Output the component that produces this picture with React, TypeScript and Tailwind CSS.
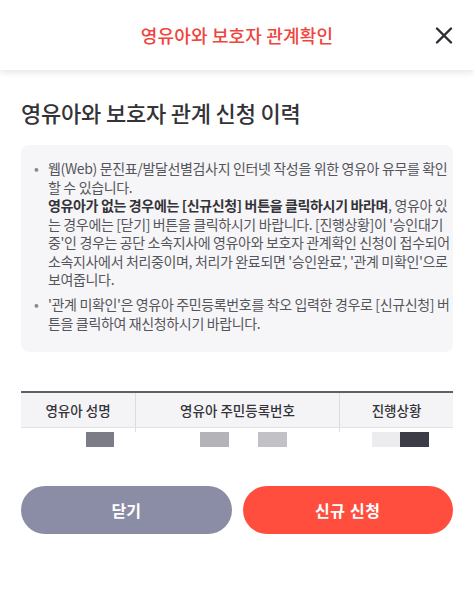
const font = "font-['Noto_Sans_CJK_KR','Noto_Sans',sans-serif]";

function CloseIcon() {
  return (
    <svg width="18" height="17" viewBox="0 0 18 17" fill="none" stroke="#2d2d33" strokeWidth="2.4" strokeLinecap="round">
      <path d="M2 1.5 L16 15.5" />
      <path d="M16 1.5 L2 15.5" />
    </svg>
  );
}

function Mask({ className }: { className: string }) {
  return <div className={`h-[15px] ${className}`} />;
}

function Line({ children }: { children: React.ReactNode }) {
  return <span className="block whitespace-nowrap">{children}</span>;
}

export default function App() {
  return (
    <div className={`${font} min-h-[590px] w-[474px] bg-white`}>
      <header className="relative flex h-[70px] items-center justify-center bg-white shadow-[0_3px_6px_rgba(0,0,0,0.09)]">
        <h1 className="text-[18px] font-medium tracking-[0.01em] text-[#f0443c]">영유아와 보호자 관계확인</h1>
        <button className="absolute right-[21px] top-[27px]">
          <CloseIcon />
        </button>
      </header>

      <main className="px-[21px]">
        <h2 className="mt-[27px] text-[22px] leading-[30px] font-medium tracking-[-0.2px] text-[#333338]">
          영유아와 보호자 관계 신청 이력
        </h2>

        <div className="mt-[18px] rounded-lg bg-[#f6f6f8] pb-[20px] pl-[13px] pr-[12px] pt-[14px] text-[14px] leading-[18.5px] tracking-[-0.35px] text-[#55555c]">
          <div className="flex">
            <span className="w-[14px] shrink-0 text-[#888]">•</span>
            <p>
              <Line>웹(Web) 문진표/발달선별검사지 인터넷 작성을 위한 영유아 유무를 확인</Line>
              <Line>할 수 있습니다.</Line>
              <Line>
                <b className="font-bold text-[#333338]">영유아가 없는 경우에는 [신규신청] 버튼을 클릭하시기 바라며</b>, 영유아 있
              </Line>
              <Line>는 경우에는 [닫기] 버튼을 클릭하시기 바랍니다. [진행상황]이 '승인대기</Line>
              <Line>중'인 경우는 공단 소속지사에 영유아와 보호자 관계확인 신청이 접수되어</Line>
              <Line>소속지사에서 처리중이며, 처리가 완료되면 '승인완료', '관계 미확인'으로</Line>
              <Line>보여줍니다.</Line>
            </p>
          </div>
          <div className="mt-[6.5px] flex">
            <span className="w-[14px] shrink-0 text-[#888]">•</span>
            <p>
              <Line>'관계 미확인'은 영유아 주민등록번호를 착오 입력한 경우로 [신규신청] 버</Line>
              <Line>튼을 클릭하여 재신청하시기 바랍니다.</Line>
            </p>
          </div>
        </div>

        <div className="mt-[39px] border-t-2 border-[#5f5f66]">
          <div className="grid h-[35px] grid-cols-[114px_204px_114px] border-b border-[#e2e2e6] bg-[#f4f4f7] text-[13.5px] font-medium text-[#333338]">
            <div className="flex items-center justify-center">영유아 성명</div>
            <div className="flex items-center justify-center border-l border-[#dcdce0]">영유아 주민등록번호</div>
            <div className="flex items-center justify-center border-l border-[#dcdce0]">진행상황</div>
          </div>
          <div className="grid grid-cols-[114px_204px_114px]">
            <div className="h-[4px]" />
            <div className="h-[4px] border-l border-[#dcdce0]" />
            <div className="h-[4px] border-l border-[#dcdce0]" />
          </div>
          <div className="grid grid-cols-[114px_204px_114px]">
            <div className="flex pl-[65px]">
              <Mask className="w-[28px] bg-[#7c7c86]" />
            </div>
            <div className="flex gap-[29px] pl-[65px]">
              <Mask className="w-[29px] bg-[#b3b3b8]" />
              <Mask className="w-[29px] bg-[#c2c2c6]" />
            </div>
            <div className="flex pl-[33px]">
              <Mask className="w-[28px] bg-[#ececee]" />
              <Mask className="w-[29px] bg-[#3c3c47]" />
            </div>
          </div>
        </div>

        <div className="mt-[39px] grid grid-cols-2 gap-[11px]">
          <button className="h-[48px] rounded-full bg-[#8b8da6] text-[16px] font-bold text-white">닫기</button>
          <button className="h-[48px] rounded-full bg-[#ff4e3e] text-[16px] font-bold tracking-[0.04em] text-white">신규 신청</button>
        </div>
      </main>
    </div>
  );
}
